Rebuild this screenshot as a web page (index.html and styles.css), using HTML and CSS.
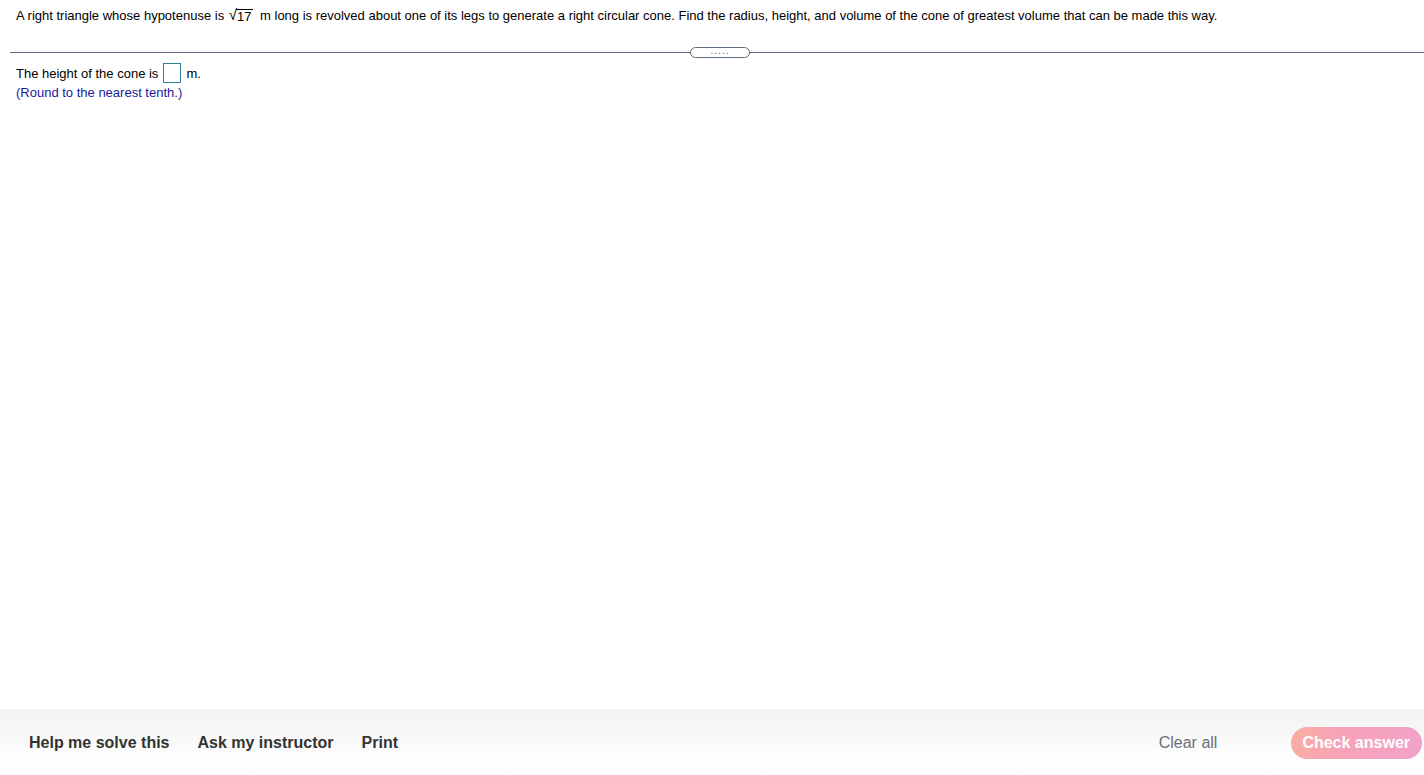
FILE: index.html
```html
<!DOCTYPE html>
<html>
<head>
<meta charset="utf-8">
<link rel="stylesheet" href="styles.css">
</head>
<body>
<div class="page">
  <div class="question">A right triangle whose hypotenuse is <span class="sqrt"><span class="radical">&#8730;</span><span class="radicand">17</span></span> m long is revolved about one of its legs to generate a right circular cone. Find the radius, height, and volume of the cone of greatest volume that can be made this way.</div>
  <div class="divider">
    <div class="pill"><span class="dots">.....</span></div>
  </div>
  <div class="answer">
    <div class="line">The height of the cone is <span class="box"></span> m.</div>
    <div class="hint">(Round to the nearest tenth.)</div>
  </div>
</div>
<div class="footer">
  <div class="left">
    <span class="link">Help me solve this</span>
    <span class="link">Ask my instructor</span>
    <span class="link">Print</span>
  </div>
  <div class="right">
    <span class="clear">Clear all</span>
    <span class="check">Check answer</span>
  </div>
</div>
</body>
</html>
```
FILE: styles.css
```css
html, body {
  margin: 0;
  padding: 0;
  height: 100%;
  background: #fff;
  font-family: "Liberation Sans", Arial, sans-serif;
  color: #000;
}
body {
  display: flex;
  flex-direction: column;
  height: 775px;
  overflow: hidden;
}
.page {
  flex: 1;
}
.question {
  font-size: 13px;
  padding: 6px 0 0 16px;
  line-height: 17px;
}
.sqrt {
  display: inline-flex;
  align-items: flex-end;
  margin: 0 3px 0 1px;
}
.radical {
  font-size: 15px;
  line-height: 17px;
}
.radicand {
  border-top: 1px solid #000;
  line-height: 13px;
  padding: 0 2px 0 1px;
  margin-left: -1px;
}
.divider {
  margin: 28px 0 0 10px;
  height: 1px;
  background: #5b6b7b;
  position: relative;
}
.pill {
  position: absolute;
  left: 680px;
  top: -5px;
  width: 58px;
  height: 9px;
  border: 1px solid #5b6b7b;
  border-radius: 6px;
  background: #fff;
  display: flex;
  justify-content: center;
  align-items: center;
}
.dots {
  font-size: 10px;
  letter-spacing: 1px;
  color: #5b6b7b;
  line-height: 9px;
  position: relative;
  top: -2px;
}
.answer {
  padding: 10px 0 0 16px;
  font-size: 13px;
}
.line {
  display: flex;
  align-items: center;
  height: 20px;
}
.box {
  display: inline-block;
  width: 16px;
  height: 18px;
  border: 1px solid #2e7d96;
  margin: 0 5px 0 5px;
}
.hint {
  color: #1a1a9c;
  margin-top: 2px;
  line-height: 15px;
}
.footer {
  box-sizing: border-box;
  height: 66px;
  background: linear-gradient(to bottom, #f2f2f2, #fdfdfd 70%, #fff);
  display: flex;
  justify-content: space-between;
  align-items: center;
  padding: 2px 2px 0 29px;
  flex-shrink: 0;
}
.left {
  display: flex;
  gap: 28px;
}
.link {
  font-weight: bold;
  font-size: 16px;
  color: #333;
}
.right {
  display: flex;
  align-items: center;
}
.clear {
  font-size: 16px;
  color: #6b6f78;
  margin-right: 74px;
}
.check {
  display: inline-block;
  font-weight: bold;
  font-size: 16px;
  color: #fff;
  padding: 0 12px 0 11px;
  height: 32px;
  line-height: 32px;
  border-radius: 16px;
  background: linear-gradient(100deg, #f9aea0 0%, #f7a3b7 35%, #f2a2c9 100%);
}
```
